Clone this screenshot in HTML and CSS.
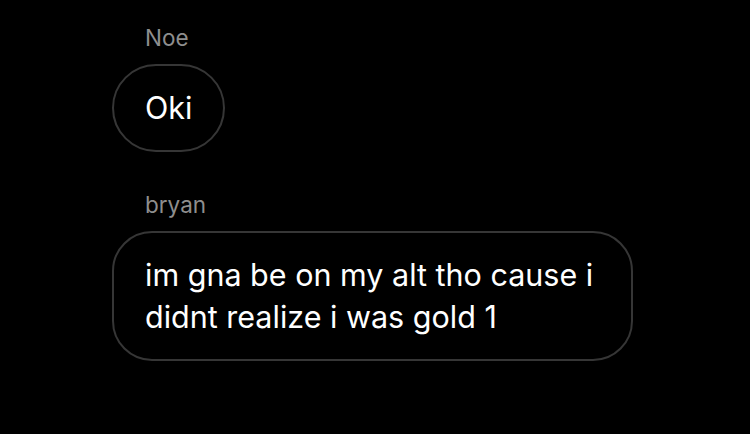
FILE: index.html
```html
<!DOCTYPE html>
<html>
<head>
<meta charset="utf-8">
<link rel="stylesheet" href="styles.css">
</head>
<body>
<div class="thread">
  <div class="group">
    <div class="name">Noe</div>
    <div class="bubble">Oki</div>
  </div>
  <div class="group second">
    <div class="name">bryan</div>
    <div class="bubble wide">im gna be on my alt tho cause i didnt realize i was gold 1</div>
  </div>
</div>
</body>
</html>
```
FILE: styles.css
```css
html, body {
  margin: 0;
  padding: 0;
  background: #000;
  width: 750px;
  height: 434px;
  overflow: hidden;
}
.thread {
  padding: 24px 0 0 112px;
  display: flex;
  flex-direction: column;
  font-family: Inter, "Liberation Sans", sans-serif;
}
.group {
  display: flex;
  flex-direction: column;
  align-items: flex-start;
}
.second {
  margin-top: 39px;
}
.name {
  color: #8e8e8e;
  font-size: 22.5px;
  line-height: 28px;
  padding-left: 33px;
  margin-bottom: 12px;
}
.bubble {
  color: #fff;
  font-size: 30.5px;
  line-height: 42px;
  padding: 21px 31px;
  border: 2px solid #363636;
  border-radius: 45px;
}
.wide {
  width: 455px;
  border-radius: 40px;
}
```
